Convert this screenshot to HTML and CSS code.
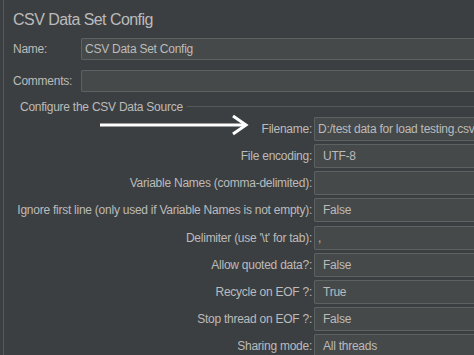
FILE: index.html
```html
<!DOCTYPE html>
<html lang="en">
  <head>
    <meta charset="UTF-8" />
    <meta name="viewport" content="width=device-width, initial-scale=1.0" />
    <title>CSV Data Set Config</title>

    <link rel="stylesheet" href="styles.css">
  </head>
  <body>
    <div class="panel">
      <h1 class="title">CSV Data Set Config</h1>

      <div class="top-row">
        <label>Name:</label>
        <div class="field text">CSV Data Set Config</div>
      </div>

      <div class="top-row">
        <label>Comments:</label>
        <div class="field text"></div>
      </div>

      <div class="legend">
        <span>Configure the CSV Data Source</span>
        <span class="rule"></span>
      </div>

      <div class="form">
        <label>Filename:</label>
        <div class="field text">D:/test data for load testing.csv</div>

        <label>File encoding:</label>
        <div class="field combo">UTF-8</div>

        <label>Variable Names (comma-delimited):</label>
        <div class="field text"></div>

        <label>Ignore first line (only used if Variable Names is not empty):</label>
        <div class="field combo">False</div>

        <label>Delimiter (use '\t' for tab):</label>
        <div class="field text">,</div>

        <label>Allow quoted data?:</label>
        <div class="field combo">False</div>

        <label>Recycle on EOF ?:</label>
        <div class="field combo">True</div>

        <label>Stop thread on EOF ?:</label>
        <div class="field combo">False</div>

        <label>Sharing mode:</label>
        <div class="field combo">All threads</div>
      </div>
    </div>

    <!-- annotation arrow pointing at the filename -->
    <svg class="arrow" width="474" height="355" viewBox="0 0 474 355">
      <line x1="100" y1="125" x2="245" y2="125" stroke="#fff" stroke-width="3" />
      <polyline points="233,116 246,125 233,134" fill="none" stroke="#fff" stroke-width="3" stroke-linejoin="miter" />
    </svg>
  </body>
</html>
```

FILE: styles.css
```css
* {
  margin: 0;
  padding: 0;
  box-sizing: border-box;
}

body {
  background-color: #3c3f41;
  color: #bbbbbb;
  font-family: "Liberation Sans", Arial, sans-serif;
  font-size: 12px;
  letter-spacing: -0.25px;
  width: 474px;
  height: 355px;
  overflow: hidden;
  position: relative;
}

.panel {
  margin-left: 3px;
  border-left: 1px solid #56595b;
  height: 355px;
  padding-left: 9px;
  padding-top: 10px;
}

.title {
  font-size: 16px;
  font-weight: normal;
  line-height: 20px;
  letter-spacing: -0.55px;
  margin-bottom: 8px;
}

.top-row {
  display: grid;
  grid-template-columns: 68px 1fr;
  align-items: center;
  margin-bottom: 10px;
}

.top-row .field {
  height: 22px;
}

/* fields run off the right edge of the window */
.field {
  background-color: #45494a;
  border: 1px solid #5e6162;
  border-right: none;
  border-radius: 2px 0 0 2px;
  height: 24px;
  display: flex;
  align-items: center;
  white-space: nowrap;
  overflow: hidden;
}

.field.text {
  padding-left: 3px;
}

.field.combo {
  padding-left: 8px;
}

.legend {
  display: flex;
  align-items: center;
  gap: 4px;
  height: 16px;
  margin-top: -3px;
  padding-left: 7px;
}

.legend .rule {
  flex: 1;
  border-top: 1px solid #56595b;
  margin-top: -2px;
}

.form {
  display: grid;
  grid-template-columns: 299px 1fr;
  column-gap: 2px;
  row-gap: 3.15px;
  align-items: center;
  margin-top: 2px;
}

.form label {
  text-align: right;
  white-space: nowrap;
}

.arrow {
  position: absolute;
  left: 0;
  top: 0;
}
```
